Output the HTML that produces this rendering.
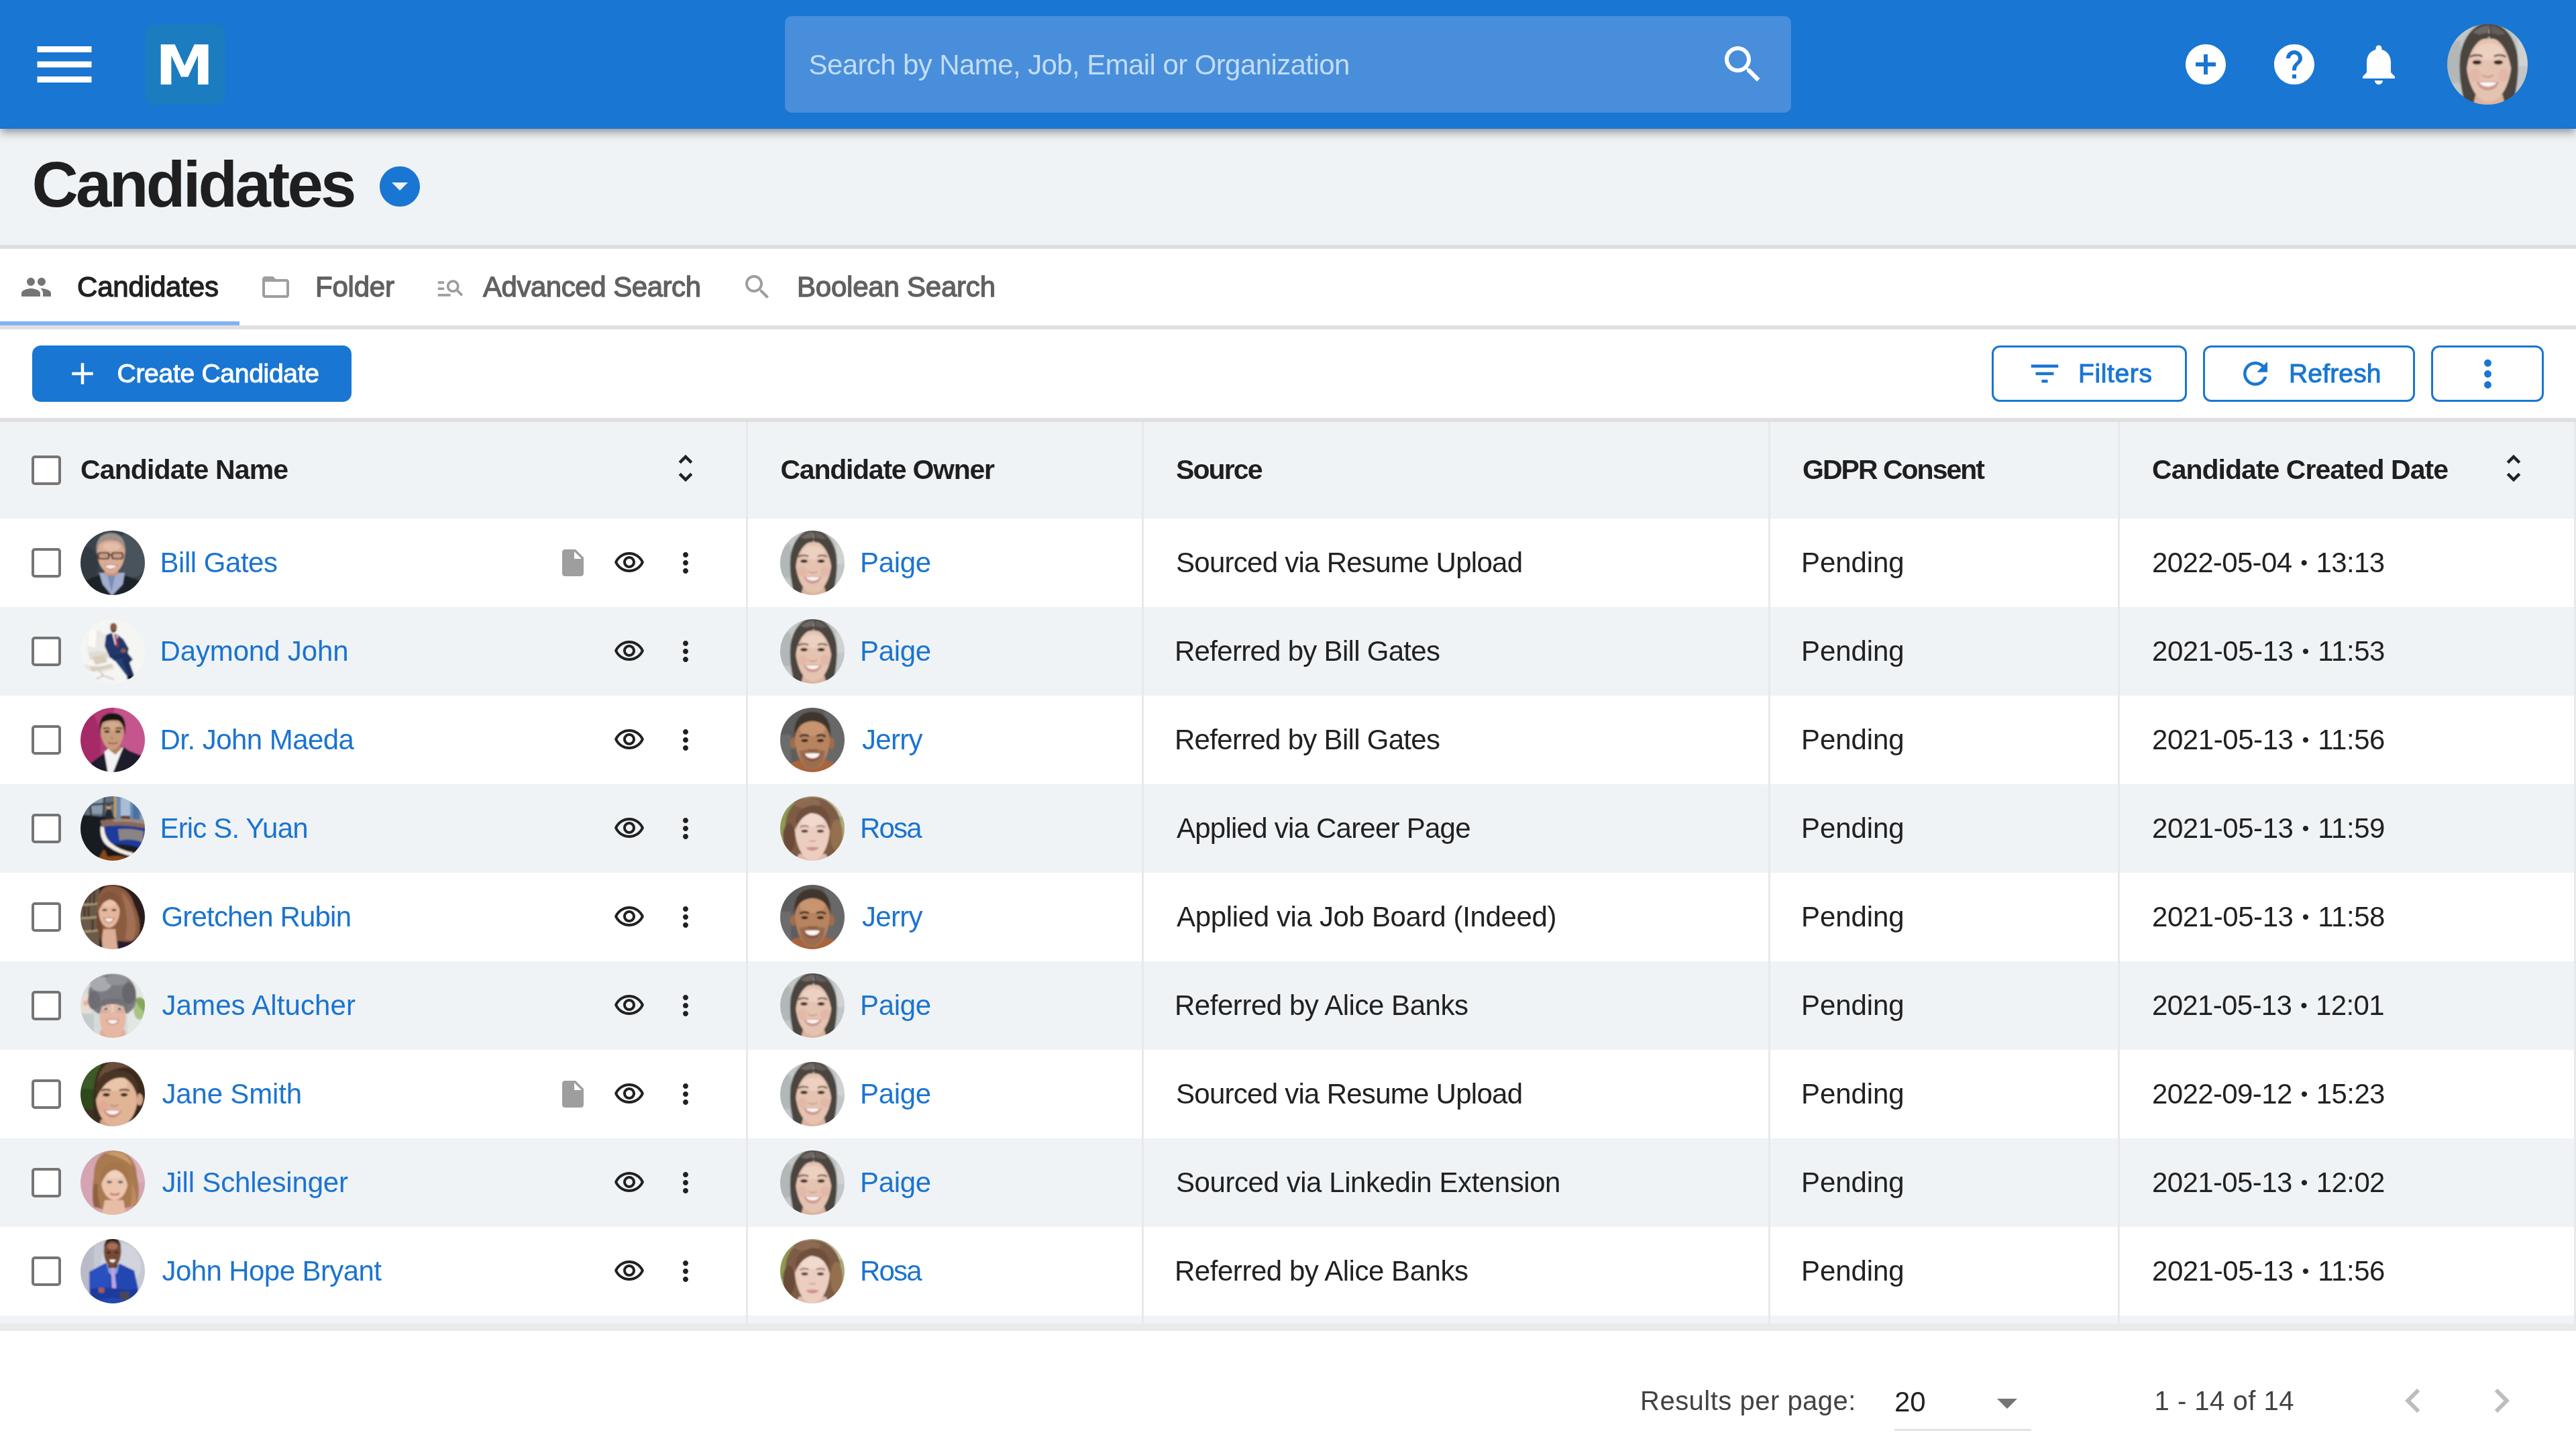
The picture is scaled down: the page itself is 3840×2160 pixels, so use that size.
<!DOCTYPE html>
<html lang="en"><head><meta charset="utf-8"><title>Candidates</title>
<style>
html,body{margin:0;padding:0}
body{width:3840px;height:2160px;overflow:hidden;background:#fff;position:relative;font-family:"Liberation Sans",sans-serif;}
.a{position:absolute}
.t{position:absolute;white-space:nowrap;display:block}
.i{position:absolute;display:block}
.bu{font-size:30px;position:relative;top:-4.5px;margin:0 2.1px}
.dj{font-family:"DejaVu Sans","Liberation Sans",sans-serif}
.av{position:absolute;border-radius:50%;overflow:hidden;display:block}
.cb{position:absolute;width:36px;height:36px;border:4px solid #757575;border-radius:5px;background:#fff}
.btn{position:absolute;box-sizing:border-box;height:84px;border:3px solid #1976d2;border-radius:12px}
#w{position:absolute;left:0;top:0;width:3840px;height:2160px;will-change:transform}
</style></head><body><div id="w">

<svg width="0" height="0" style="position:absolute"><defs><symbol id="menu" viewBox="0 0 24 24"><path d="M3 18h18v-2H3v2zm0-5h18v-2H3v2zm0-7v2h18V6H3z"/></symbol><symbol id="search" viewBox="0 0 24 24"><path d="M15.5 14h-.79l-.28-.27C15.41 12.59 16 11.11 16 9.5 16 5.91 13.09 3 9.5 3S3 5.91 3 9.5 5.91 16 9.5 16c1.61 0 3.09-.59 4.23-1.57l.27.28v.79l5 4.99L20.49 19l-4.99-5zm-6 0C7.01 14 5 11.99 5 9.5S7.01 5 9.5 5 14 7.01 14 9.5 11.99 14 9.5 14z"/></symbol><symbol id="add_circle" viewBox="0 0 24 24"><path d="M12 2C6.48 2 2 6.48 2 12s4.48 10 10 10 10-4.48 10-10S17.52 2 12 2zm5 11h-4v4h-2v-4H7v-2h4V7h2v4h4v2z"/></symbol><symbol id="help" viewBox="0 0 24 24"><path d="M12 2C6.48 2 2 6.48 2 12s4.48 10 10 10 10-4.48 10-10S17.52 2 12 2zm1 17h-2v-2h2v2zm2.07-7.75l-.9.92C13.45 12.9 13 13.5 13 15h-2v-.5c0-1.1.45-2.1 1.17-2.83l1.24-1.26c.37-.36.59-.86.59-1.41 0-1.1-.9-2-2-2s-2 .9-2 2H8c0-2.21 1.79-4 4-4s4 1.79 4 4c0 .88-.36 1.68-.93 2.25z"/></symbol><symbol id="bell" viewBox="0 0 24 24"><path d="M12 22c1.1 0 2-.9 2-2h-4c0 1.1.89 2 2 2zm6-6v-5c0-3.07-1.64-5.64-4.5-6.32V4c0-.83-.67-1.5-1.5-1.5s-1.5.67-1.5 1.5v.68C7.63 5.36 6 7.92 6 11v5l-2 2v1h16v-1l-2-2z"/></symbol><symbol id="ddc" viewBox="0 0 24 24"><path d="M12 2C6.48 2 2 6.48 2 12s4.48 10 10 10 10-4.48 10-10S17.52 2 12 2zm0 12l-4-4h8l-4 4z"/></symbol><symbol id="people" viewBox="0 0 24 24"><path d="M16 11c1.66 0 2.99-1.34 2.99-3S17.66 5 16 5c-1.66 0-3 1.34-3 3s1.34 3 3 3zm-8 0c1.66 0 2.99-1.34 2.99-3S9.66 5 8 5C6.34 5 5 6.34 5 8s1.34 3 3 3zm0 2c-2.33 0-7 1.17-7 3.5V19h14v-2.500c0-2.33-4.67-3.5-7-3.5zm8 0c-.29 0-.62.02-.97.05 1.16.84 1.97 1.97 1.97 3.45V19h6v-2.500c0-2.33-4.67-3.5-7-3.5z"/></symbol><symbol id="folder" viewBox="0 0 24 24"><path d="M20 6h-8l-2-2H4c-1.1 0-1.99.9-1.99 2L2 18c0 1.1.9 2 2 2h16c1.1 0 2-.9 2-2V8c0-1.1-.9-2-2-2zm0 12H4V8h16v10z"/></symbol><symbol id="msearch" viewBox="0 0 24 24"><path d="M7 9H2V7h5v2zm0 3H2v2h5v-2zm13.590 7l-3.830-3.830c-.8.52-1.74.83-2.76.83-2.76 0-5-2.24-5-5s2.24-5 5-5 5 2.24 5 5c0 1.020-.31 1.960-.83 2.750L22 17.590 20.590 19zM17 11c0-1.650-1.350-3-3-3s-3 1.350-3 3 1.350 3 3 3 3-1.350 3-3zM2 19h10v-2H2v2z"/></symbol><symbol id="add" viewBox="0 0 24 24"><path d="M19 13h-6v6h-2v-6H5v-2h6V5h2v6h6v2z"/></symbol><symbol id="filter" viewBox="0 0 24 24"><path d="M10 18h4v-2h-4v2zM3 6v2h18V6H3zm3 7h12v-2H6v2z"/></symbol><symbol id="refresh" viewBox="0 0 24 24"><path d="M17.65 6.35C16.2 4.9 14.21 4 12 4c-4.42 0-7.99 3.58-7.99 8s3.57 8 7.99 8c3.73 0 6.84-2.55 7.73-6h-2.08c-.82 2.33-3.04 4-5.65 4-3.31 0-6-2.69-6-6s2.69-6 6-6c1.66 0 3.14.69 4.22 1.78L13 11h7V4l-2.35 2.35z"/></symbol><symbol id="more" viewBox="0 0 24 24"><path d="M12 8c1.1 0 2-.9 2-2s-.9-2-2-2-2 .9-2 2 .9 2 2 2zm0 2c-1.1 0-2 .9-2 2s.9 2 2 2 2-.9 2-2-.9-2-2-2zm0 6c-1.1 0-2 .9-2 2s.9 2 2 2 2-.9 2-2-.9-2-2-2z"/></symbol><symbol id="unfold" viewBox="0 0 24 24"><path d="M12 5.83L15.17 9l1.41-1.41L12 3 7.41 7.59 8.83 9 12 5.830zm0 12.340L8.83 15l-1.41 1.41L12 21l4.59-4.59L15.17 15 12 18.170z"/></symbol><symbol id="file" viewBox="0 0 24 24"><path d="M6 2c-1.1 0-1.99.9-1.99 2L4 20c0 1.1.89 2 1.99 2H18c1.1 0 2-.9 2-2V8l-6-6H6zm7 7V3.500L18.500 9H13z"/></symbol><symbol id="eye" viewBox="0 0 24 24"><path d="M12 6c3.79 0 7.17 2.13 8.82 5.5C19.17 14.87 15.79 17 12 17s-7.17-2.13-8.82-5.500C4.83 8.13 8.21 6 12 6m0-2C7 4 2.73 7.11 1 11.500 2.73 15.89 7 19 12 19s9.27-3.11 11-7.500C21.27 7.11 17 4 12 4zm0 5c1.38 0 2.5 1.12 2.5 2.500S13.38 14 12 14s-2.500-1.120-2.500-2.500S10.620 9 12 9m0-2c-2.480 0-4.500 2.020-4.500 4.500S9.520 16 12 16s4.500-2.020 4.500-4.500S14.480 7 12 7z"/></symbol><symbol id="chl" viewBox="0 0 24 24"><path d="M15.41 7.41L14 6l-6 6 6 6 1.41-1.41L10.83 12z"/></symbol><symbol id="chr" viewBox="0 0 24 24"><path d="M10 6L8.59 7.41 13.17 12l-4.58 4.59L10 18l6-6z"/></symbol><filter id="bl" x="-5%" y="-5%" width="110%" height="110%"><feGaussianBlur stdDeviation=".9"/></filter><symbol id="av-paige" viewBox="0 0 96 96"><g filter="url(#bl)"><rect x="-10" y="-10" width="116" height="116" fill="#c2c6c6"/>
<rect x="-10" y="20" width="26" height="50" fill="#b2b7b8"/>
<rect x="84" y="-10" width="22" height="60" fill="#cfd2d1"/>
<path d="M49.700 -2C33 -2 19 15 15.500 38C13 62 18 82 22 100L77 100C82 82 86 62 84 38C81 15 66 -2 49.700 -2Z" fill="#4b4541"/>
<path d="M30 10Q40 2 49 1L47 16Q38 12 30 10Z" fill="#6e6763"/>
<path d="M52 1Q62 3 70 12Q60 12 53 16Z" fill="#645d59"/>
<path d="M49.700 0L48.500 17L51 17Z" fill="#b5aeaa"/>
<path d="M34 84L66 84L70 100L30 100Z" fill="#dcb39f"/>
<path d="M49.700 17C66 17 76.500 30 76.500 46C76.500 66 66 93 49.700 93C33 93 23 66 23 46C23 30 33 17 49.700 17Z" fill="#e5c3b1"/>
<ellipse cx="49.700" cy="33" rx="17" ry="10" fill="#ecd0c0"/>
<ellipse cx="33" cy="61" rx="7" ry="8" fill="#e2b9a8"/>
<ellipse cx="67" cy="61" rx="7" ry="8" fill="#e2b9a8"/>
<path d="M49.700 15C38 17 27 28 23.500 52L19 52C17 25 35 9 49.700 11Z" fill="#4b4541"/>
<path d="M49.700 15C61 17 72 28 76 52L81 52C83 25 64 9 49.700 11Z" fill="#4b4541"/>
<ellipse cx="35.500" cy="45.500" rx="5.400" ry="2.600" fill="#3a2a25"/>
<ellipse cx="61" cy="45.500" rx="5.400" ry="2.600" fill="#3a2a25"/>
<path d="M27 39Q35 35 42 38.500" stroke="#5a4238" stroke-width="2" fill="none"/>
<path d="M56 38.500Q63 35 70 39" stroke="#5a4238" stroke-width="2" fill="none"/>
<path d="M42 61Q48.500 65 55 61" stroke="#c9998a" stroke-width="2" fill="none"/>
<path d="M35 69Q48.500 67 62 69Q58 79 48.500 79Q39 79 35 69Z" fill="#cf9892"/>
<path d="M38 69.500Q48.500 68.500 59 69.500Q55 74.500 48.500 74.500Q42 74.500 38 69.500Z" fill="#fbf6f2"/></g></symbol><symbol id="av-jerry" viewBox="0 0 96 96"><g filter="url(#bl)"><rect x="-10" y="-10" width="116" height="116" fill="#5d5d5d"/>
<rect x="66" y="-10" width="40" height="116" fill="#676767"/>
<rect x="-10" y="40" width="26" height="66" fill="#6c6c6c"/>
<path d="M-4 100Q8 80 34 78L62 78Q88 80 100 100Z" fill="#a8653d"/>
<path d="M48 6C30 6 20 20 21 40L23 56L73 56L75 40C76 20 66 6 48 6Z" fill="#40352e"/>
<ellipse cx="19.500" cy="53" rx="4.500" ry="8.500" fill="#a36c49"/>
<ellipse cx="76.500" cy="53" rx="4.500" ry="8.500" fill="#a36c49"/>
<path d="M48 14C64 14 74 26 74 44C74 66 64 92 48 92C32 92 22 66 22 44C22 26 32 14 48 14Z" fill="#b8845f"/>
<ellipse cx="48" cy="30" rx="19" ry="12" fill="#c9956f"/>
<path d="M22 44Q22 12 48 10Q74 12 74 44Q70 21 48 20Q26 21 22 44Z" fill="#40352e"/>
<ellipse cx="36.500" cy="49" rx="5" ry="2.200" fill="#2c211c"/>
<ellipse cx="60" cy="49" rx="5" ry="2.200" fill="#2c211c"/>
<path d="M29 43Q36.500 38.500 43 42.500" stroke="#2c211c" stroke-width="2.600" fill="none"/>
<path d="M54 42.500Q60 38.500 68 43" stroke="#2c211c" stroke-width="2.600" fill="none"/>
<path d="M42 62Q48 65.500 55 62" stroke="#8a553a" stroke-width="2.200" fill="none"/>
<path d="M29 64Q48 60 67 64Q66 88 48 92Q30 88 29 64Z" fill="#7d5540" opacity=".5"/>
<path d="M34 68Q48 66 62 68Q58 80 48 80Q38 80 34 68Z" fill="#8f4f42"/>
<path d="M36.500 68.500Q48 67 59.500 68.500Q56 75.500 48 75.500Q40 75.500 36.500 68.500Z" fill="#fbf7f3"/></g></symbol><symbol id="av-rosa" viewBox="0 0 96 96"><g filter="url(#bl)"><rect x="-10" y="-10" width="116" height="116" fill="#b5b38a"/>
<rect x="-10" y="-10" width="40" height="70" fill="#8f9a54"/>
<rect x="70" y="-10" width="36" height="116" fill="#cfcbae"/>
<rect x="80" y="30" width="26" height="40" fill="#a9ad7a"/>
<path d="M48 1C24 1 8 20 8 44C6 60 10 78 20 92L78 92C90 78 92 60 90 44C90 20 72 1 48 1Z" fill="#7c5b45"/>
<ellipse cx="13" cy="62" rx="9" ry="22" fill="#6b4b37"/>
<ellipse cx="84" cy="58" rx="9" ry="24" fill="#94704f"/>
<ellipse cx="40" cy="10" rx="20" ry="8" fill="#8e6b52"/>
<path d="M28 86L68 86L76 100L20 100Z" fill="#dfbcae"/>
<path d="M48 18C64 18 74 30 74 48C74 68 64 96 48 96C32 96 22 68 22 48C22 30 32 18 48 18Z" fill="#ecCEC1"/>
<ellipse cx="48" cy="34" rx="18" ry="11" fill="#f2d9cd"/>
<path d="M22.500 50Q20 16 50 13Q78 16 73.500 52Q68 26 46 25Q30 30 22.500 50Z" fill="#70503c"/>
<ellipse cx="36.500" cy="52" rx="5" ry="2.200" fill="#4a3a34"/>
<ellipse cx="60" cy="52" rx="5" ry="2.200" fill="#4a3a34"/>
<path d="M29.500 46Q36 42.500 42.500 45.500" stroke="#7d5f50" stroke-width="1.800" fill="none"/>
<path d="M54 45.500Q60 42.500 67 46" stroke="#7d5f50" stroke-width="1.800" fill="none"/>
<path d="M43 66Q48 68.500 53 66" stroke="#c9a092" stroke-width="1.800" fill="none"/>
<path d="M38 76.500Q48 74.500 58 76.500Q54 81 48 81Q42 81 38 76.500Z" fill="#cf8f8a"/></g></symbol><symbol id="av-bill" viewBox="0 0 96 96"><g filter="url(#bl)"><rect x="-10" y="-10" width="116" height="116" fill="#3b434c"/>
<ellipse cx="76" cy="36" rx="26" ry="34" fill="#48525c"/>
<ellipse cx="10" cy="50" rx="16" ry="26" fill="#323a43"/>
<path d="M-4 100L6 76Q20 68 32 65L60 65Q78 70 90 76L100 100Z" fill="#1f2026"/>
<path d="M28 63L66 63L63 80L47 97L33 80Z" fill="#a2aed0"/>
<path d="M40 66L46 92L52 66Z" fill="#7f8db4"/>
<rect x="36" y="54" width="20" height="13" fill="#c8957d"/>
<path d="M45.500 6C58 6 66 16 66 32C66 48 58 64 45.500 64C34 64 25 48 25 32C25 16 33 6 45.500 6Z" fill="#dbac94"/>
<path d="M24 36Q20 5 45 3.500Q68 4 67 34Q63 17 52 15Q36 13 28 20Q25 26 24 36Z" fill="#9c928a"/>
<ellipse cx="46" cy="24" rx="13" ry="6" fill="#e6bea7"/>
<rect x="26.500" y="33" width="16" height="9" rx="3" fill="#c99a84" stroke="#3d302b" stroke-width="2.200"/>
<rect x="47" y="33" width="16" height="9" rx="3" fill="#c99a84" stroke="#3d302b" stroke-width="2.200"/>
<path d="M42.500 36L47 36" stroke="#3d302b" stroke-width="1.800"/>
<path d="M36 51.500Q45 49.500 55 51.500Q51 57.500 45 57.500Q39 57.500 36 51.500Z" fill="#f7eeea" stroke="#a9695c" stroke-width="1"/></g></symbol><symbol id="av-daymond" viewBox="0 0 96 96"><g filter="url(#bl)"><rect x="-10" y="-10" width="116" height="116" fill="#f5f5f4"/>
<path d="M13 20Q15 15 24 16Q36 18 38 30L41 56Q30 62 14 58Q6 40 13 20Z" fill="#ebe9e5"/>
<path d="M13 20Q15 15 24 16L22 42Q14 42 10 38Z" fill="#fbfaf8"/>
<path d="M12 50Q26 46 40 50L42 58Q28 64 14 60Z" fill="#dfdcd6"/>
<path d="M18 56L36 53L40 64L22 68Z" fill="#d8cdb9"/>
<path d="M6 66Q26 76 48 66L52 74Q28 84 6 74Z" fill="#e9e7e3"/>
<path d="M14 70Q30 72 46 66L48 72Q30 76 16 78Z" fill="#d9cfbe"/>
<path d="M28 76L34 84L22 90M34 84L50 90" stroke="#cfccc6" stroke-width="2.400" fill="none"/>
<path d="M38 24Q46 18 54 22L64 30L72 44L70 52L56 56L44 58L36 40Z" fill="#20396c"/>
<path d="M44 56L70 50L78 60L72 66L62 64L50 62Z" fill="#1c3260"/>
<path d="M50 60L62 58L76 82L70 86Z" fill="#233f75"/>
<path d="M62 62L72 62L80 84L74 88Z" fill="#1a2f5c"/>
<path d="M70 84L82 86L80 92L69 89Z" fill="#15161a"/>
<ellipse cx="49.200" cy="12" rx="5.200" ry="6.600" fill="#8a5a42"/>
<path d="M45 15Q49 21 53.500 15L53 18Q49 22 45.500 18Z" fill="#2b1d18"/>
<path d="M47 20L53 20L56 26L52 40Z" fill="#f1f1f3"/>
<path d="M50 22L53 22L57 40L54 42Z" fill="#b3223b"/>
<ellipse cx="64" cy="47" rx="4" ry="3" fill="#8a5a42"/></g></symbol><symbol id="av-maeda" viewBox="0 0 96 96"><g filter="url(#bl)"><rect x="-10" y="-10" width="116" height="116" fill="#b33a76"/>
<ellipse cx="84" cy="36" rx="40" ry="60" fill="#c5568d"/>
<ellipse cx="4" cy="56" rx="26" ry="56" fill="#a62a67"/>
<path d="M6 100L16 82L36 67L40 60L64 58L72 64L92 72L104 100Z" fill="#1d1d2a"/>
<path d="M35.500 66L42 60L64 59L60 68L48 98L41 98Z" fill="#f4f2f3"/>
<path d="M42 62L52 70L62 60L56 56L44 56Z" fill="#b58161"/>
<path d="M47.500 10C58 10 64.500 20 64.500 34C64.500 48 57 63 47.500 63C38 63 30 48 30 34C30 20 37 10 47.500 10Z" fill="#c89b7d"/>
<path d="M29 40Q24 8 48 8Q71 8 66 40Q64 22 56 19Q42 17 33 22Q30 28 29 40Z" fill="#17120f"/>
<ellipse cx="47.500" cy="27" rx="12" ry="6" fill="#d5aa8b"/>
<ellipse cx="39.500" cy="35.500" rx="4" ry="1.800" fill="#2a1c18"/>
<ellipse cx="56" cy="35.500" rx="4" ry="1.800" fill="#2a1c18"/>
<path d="M34 31.500Q39 29 44 31M52 31Q57 29 62 31.500" stroke="#241a16" stroke-width="1.800" fill="none"/>
<path d="M46 42L45 47L50 47Z" fill="#b3836a"/>
<path d="M41 52Q48 54.500 55 52" stroke="#9a5e52" stroke-width="2" fill="none"/></g></symbol><symbol id="av-eric" viewBox="0 0 96 96"><g filter="url(#bl)"><rect x="-10" y="-10" width="116" height="116" fill="#1b1d23"/>
<rect x="-10" y="-10" width="61" height="40" fill="#62717f"/>
<rect x="16" y="-10" width="18" height="36" fill="#8a9bab"/>
<path d="M12 -10L16 30M36 -10L34 30M-4 14L50 10" stroke="#36414c" stroke-width="3"/>
<rect x="52" y="-10" width="54" height="48" fill="#6c8bb4"/>
<rect x="60" y="2" width="14" height="30" fill="#a9bdd6"/>
<rect x="78" y="4" width="10" height="30" fill="#4e70a0"/>
<rect x="90" y="-4" width="16" height="40" fill="#8fa6c6"/>
<rect x="50" y="-10" width="3" height="42" fill="#c9a13c"/>
<path d="M-10 26L30 30L32 106L-10 106Z" fill="#191b21"/>
<path d="M36 30Q38 18 42 18Q47 18 49 31L48 36L37 36Z" fill="#2a2a30"/>
<ellipse cx="42" cy="15.500" rx="3.600" ry="4" fill="#c99a78"/>
<path d="M38 14.500Q42 9 46 14.500Z" fill="#1a1614"/>
<rect x="60" y="29" width="14" height="7" rx="1.500" fill="#5e4029"/>
<path d="M30 36Q62 30 106 38L106 50Q62 40 31 46Z" fill="#86695a"/>
<path d="M48 34Q70 32 100 38L100 42Q70 36 50 38Z" fill="#a58c80"/>
<path d="M31 46Q62 40 106 50L106 84Q70 66 34 74Z" fill="#1c3a9c"/>
<path d="M56 49Q76 47 94 52L93 69Q76 62 58 66Z" fill="#8a8482"/>
<path d="M30 45Q28 64 40 74Q56 86 80 90L78 84Q58 80 46 70Q36 62 35 46Z" fill="#f4ede2"/>
<path d="M34 80Q56 92 84 92L70 106L20 106Z" fill="#8a4a12"/>
<path d="M32 66Q40 80 62 88L40 90Z" fill="#15161a"/></g></symbol><symbol id="av-gretchen" viewBox="0 0 96 96"><g filter="url(#bl)"><rect x="-10" y="-10" width="116" height="116" fill="#2b1e1a"/>
<rect x="-10" y="-10" width="38" height="116" fill="#6b5a47"/>
<path d="M2 30L26 28M0 50L26 48M4 70L26 68" stroke="#a99a7c" stroke-width="3"/>
<path d="M8 -4L8 28M14 -4L14 28M20 -4L20 28M6 32L6 48M12 32L12 48M18 52L18 68" stroke="#40332a" stroke-width="2.500"/>
<path d="M30 100Q40 84 60 82Q84 84 96 100Z" fill="#2a1c2e"/>
<path d="M44 1C28 3 24 20 25 40Q22 62 30 82L62 84Q84 88 88 70Q90 50 80 30C76 12 62 0 44 1Z" fill="#8b5b41"/>
<path d="M60 10Q78 24 82 56Q84 74 76 84L66 80Q74 50 60 10Z" fill="#a27054"/>
<path d="M25 40Q22 62 30 82L36 80Q30 60 30 40Z" fill="#71452f"/>
<path d="M34 66L52 66L56 100L34 100Q30 84 34 66Z" fill="#dcae95"/>
<path d="M42.500 12C52 12 58.500 22 58.500 38C58.500 52 51 64 42.500 64C34 64 27 52 27 38C27 22 33 12 42.500 12Z" fill="#e4b69c"/>
<ellipse cx="42" cy="26" rx="11" ry="7" fill="#ecc4ab"/>
<path d="M27 40Q24 12 44 10Q62 12 60 42Q56 24 44 22Q32 24 27 40Z" fill="#85553a"/>
<ellipse cx="36" cy="37.500" rx="3.400" ry="1.600" fill="#3a2620"/>
<ellipse cx="50" cy="37.500" rx="3.400" ry="1.600" fill="#3a2620"/>
<path d="M35 50Q42.500 48.500 50 50Q47 56 42.500 56Q38 56 35 50Z" fill="#f8efea" stroke="#b8605c" stroke-width="1.200"/></g></symbol><symbol id="av-james" viewBox="0 0 96 96"><g filter="url(#bl)"><rect x="-10" y="-10" width="116" height="116" fill="#d6dbd9"/>
<rect x="70" y="-10" width="36" height="116" fill="#e3e7e4"/>
<ellipse cx="88" cy="52" rx="9" ry="17" fill="#a9c388"/>
<path d="M82 38Q92 34 100 44L96 58Q86 52 82 38Z" fill="#86a65c"/>
<rect x="-10" y="30" width="26" height="30" fill="#e7dcd4"/>
<circle cx="8" cy="44" r="4" fill="#e9b49c"/>
<rect x="-10" y="60" width="30" height="46" fill="#c3ccca"/>
<path d="M48 1C26 0 10 14 12 34Q12 52 26 60L70 60Q84 52 83 34C84 14 70 0 48 1Z" fill="#7a7a80"/>
<ellipse cx="30" cy="16" rx="16" ry="11" fill="#a9a9b0"/>
<ellipse cx="54" cy="10" rx="16" ry="8" fill="#909097"/>
<ellipse cx="72" cy="30" rx="10" ry="16" fill="#66666c"/>
<ellipse cx="20" cy="40" rx="9" ry="14" fill="#6d6d73"/>
<path d="M30 84L66 84L70 106L26 106Z" fill="#e0ae99"/>
<path d="M48 42C60 42 67.500 52 67.500 64C67.500 80 60 98 48 98C36 98 28.500 80 28.500 64C28.500 52 36 42 48 42Z" fill="#e6b7a3"/>
<ellipse cx="48" cy="52" rx="14" ry="6" fill="#efcbb9"/>
<path d="M27 58Q24 36 48 38Q72 36 69 58Q64 45 48 46Q32 45 27 58Z" fill="#6f6f75"/>
<rect x="31" y="49" width="14" height="8" rx="3" fill="none" stroke="#b8a59c" stroke-width="1.300"/>
<rect x="51" y="49" width="14" height="8" rx="3" fill="none" stroke="#b8a59c" stroke-width="1.300"/>
<ellipse cx="38" cy="53" rx="3" ry="1.500" fill="#5a4640"/>
<ellipse cx="58" cy="53" rx="3" ry="1.500" fill="#5a4640"/>
<path d="M39 69.500Q48 68 57 69.500Q54 76 48 76Q42 76 39 69.500Z" fill="#fbf6f2" stroke="#c2726a" stroke-width="1.200"/></g></symbol><symbol id="av-jane" viewBox="0 0 96 96"><g filter="url(#bl)"><rect x="-10" y="-10" width="116" height="116" fill="#2f4a1f"/>
<rect x="-10" y="-10" width="40" height="50" fill="#3a5a28"/>
<rect x="-10" y="70" width="30" height="36" fill="#3d3324"/>
<path d="M52 -4C30 -2 22 16 20 40Q16 70 24 100L106 100L106 -10Z" fill="#3a291f"/>
<path d="M52 -4C36 0 26 16 24 36L28 30Q40 8 70 8Q84 12 92 30L100 20Q80 -6 52 -4Z" fill="#6a4e3b"/>
<path d="M30 86L72 86L76 106L26 106Z" fill="#d3a184"/>
<path d="M53 14C72 14 85 30 85 52C85 76 72 97 53 97C36 97 23 76 23 52C23 30 34 14 53 14Z" fill="#e1b496"/>
<ellipse cx="88" cy="56" rx="5" ry="9" fill="#d7a587"/>
<ellipse cx="50" cy="32" rx="20" ry="11" fill="#ebc5aa"/>
<ellipse cx="34" cy="66" rx="8" ry="8" fill="#e2a996"/>
<path d="M23 56Q18 14 54 12Q90 14 85 54Q80 32 66 24Q38 20 23 56Z" fill="#4a3427"/>
<ellipse cx="38.500" cy="49" rx="5.400" ry="2.400" fill="#2e201b"/>
<ellipse cx="65" cy="49" rx="5.400" ry="2.400" fill="#2e201b"/>
<path d="M31 43Q38 39.500 45 42.500M58 42.500Q65 39.500 73 43" stroke="#4b352c" stroke-width="2.200" fill="none"/>
<path d="M44 64Q50 68 56 64" stroke="#bf8b72" stroke-width="2" fill="none"/>
<path d="M35 72.500Q48 70 61 72.500Q57 83 48 83Q39 83 35 72.500Z" fill="#c98480"/>
<path d="M37.500 73Q48 71.500 58.500 73Q55 78.500 48 78.500Q41 78.500 37.500 73Z" fill="#fbf6f2"/></g></symbol><symbol id="av-jill" viewBox="0 0 96 96"><g filter="url(#bl)"><rect x="-10" y="-10" width="116" height="116" fill="#d4a5b0"/>
<ellipse cx="80" cy="20" rx="30" ry="30" fill="#dbb0ba"/>
<path d="M50 0C30 0 20 16 20 38Q16 60 20 84L34 88L66 86L84 82Q90 60 84 38C84 16 70 0 50 0Z" fill="#a9794f"/>
<path d="M36 4Q52 -2 66 6Q74 12 78 24Q64 10 36 4Z" fill="#c99b69"/>
<path d="M20 50Q16 70 20 84L30 86Q24 66 26 50Z" fill="#8f6240"/>
<path d="M76 46Q84 64 84 82L74 84Q78 66 76 46Z" fill="#ba8c5e"/>
<path d="M36 74L64 74L70 106L30 106Z" fill="#e8bda6"/>
<path d="M51 20C62 20 70.500 30 70.500 46C70.500 60 62 74 51 74C40 74 31 60 31 46C31 30 40 20 51 20Z" fill="#ecc5ae"/>
<ellipse cx="51" cy="34" rx="13" ry="8" fill="#f2d2be"/>
<path d="M31 50Q26 18 54 18Q76 20 70.500 52Q66 32 52 29Q38 30 31 50Z" fill="#a5744b"/>
<ellipse cx="43" cy="47" rx="3.800" ry="1.800" fill="#5a5560"/>
<ellipse cx="59.500" cy="47" rx="3.800" ry="1.800" fill="#5a5560"/>
<path d="M44 64Q51 68 58 64" stroke="#d0746e" stroke-width="2.600" fill="none"/></g></symbol><symbol id="av-bryant" viewBox="0 0 96 96"><g filter="url(#bl)"><rect x="-10" y="-10" width="116" height="116" fill="#c6c8d3"/>
<ellipse cx="60" cy="40" rx="30" ry="34" fill="#d2d4dd"/>
<rect x="-10" y="-10" width="30" height="116" fill="#b9bcc8"/>
<path d="M14 106L13 49L37 36L59 37L80 47L86 74L84 106Z" fill="#2447b2"/>
<path d="M13 49L37 36L44 60L40 80L14 80Z" fill="#2a50c0"/>
<path d="M38.500 36L57.500 37L55 50L48 56L42 50Z" fill="#8d9cda"/>
<path d="M45.500 43L50.500 43L54 78L50 82L47 78Z" fill="#bba4e2"/>
<path d="M14 74Q40 70 70 76L86 74L84 92Q50 84 16 92Z" fill="#1d3b9c"/>
<path d="M27 73Q32 71 36 74L35 80Q30 81 27 79Z" fill="#a0604a"/>
<path d="M58 79L72 78L73 90L60 91Z" fill="#4a4a52"/>
<rect x="41" y="34" width="14" height="9" fill="#5d3b2c"/>
<path d="M47.600 -1C56 -1 60.500 7 60.500 18C60.500 30 55 41.500 47.600 41.500C40 41.500 34.800 30 34.800 18C34.800 7 40 -1 47.600 -1Z" fill="#774835"/>
<ellipse cx="47.600" cy="11" rx="8" ry="5" fill="#a17059"/>
<path d="M35 12Q36 -2 47.600 -2.500Q59 -2 60.300 12Q56 3 47.600 3Q40 3 35 12Z" fill="#2a1d18"/>
<ellipse cx="42" cy="20" rx="2.800" ry="1.300" fill="#1e1410"/>
<ellipse cx="53.500" cy="20" rx="2.800" ry="1.300" fill="#1e1410"/>
<path d="M42 30.500Q47.600 29.500 53.500 30.500Q51 35.500 47.600 35.500Q44.500 35.500 42 30.500Z" fill="#fbf6f2" stroke="#4a2c24" stroke-width=".8"/></g></symbol></defs></svg>
<div class="a" style="left:0;top:192px;width:3840px;height:173px;background:#eff3f6"></div>
<div class="a" style="left:0;top:365px;width:3840px;height:6px;background:#dddfe0"></div>
<span class="t " id="t0" style="left:47.50px;top:207.80px;font-size:96px;line-height:134px;letter-spacing:-3.717px;color:#1f1f1f;font-weight:700;">Candidates</span>
<svg class="i" style="left:560.00px;top:241.50px;width:72px;height:72px;fill:#1976d2;" viewBox="0 0 24 24"><use href="#ddc"/></svg>
<div class="a" style="left:0;top:0;width:3840px;height:192px;background:#1976d2;box-shadow:0 6px 9px -3px rgba(0,0,0,.22),0 9px 12px 0 rgba(0,0,0,.13),0 3px 18px 0 rgba(0,0,0,.1)"></div>
<svg class="i" style="left:42.00px;top:42.00px;width:108px;height:108px;fill:#fff;" viewBox="0 0 24 24"><use href="#menu"/></svg>
<div class="a" style="left:216px;top:36px;width:120px;height:120px;border-radius:14px;background:#1b7cbf"></div>
<span class="t dj" id="t1" style="left:234.10px;top:41.30px;font-size:82px;line-height:114px;letter-spacing:2.987px;color:#fff;font-weight:700;transform:scaleX(1.064);transform-origin:34.2px 50%;letter-spacing:0;">M</span>
<div class="a" style="left:1170px;top:24px;width:1500px;height:144px;border-radius:10px;background:#488edb"></div>
<span class="t " id="t2" style="left:1205.50px;top:67.50px;font-size:42px;line-height:58px;letter-spacing:-0.592px;color:#c3dcf6;">Search by Name, Job, Email or Organization</span>
<svg class="i" style="left:2562.00px;top:60.00px;width:72px;height:72px;fill:#fff;" viewBox="0 0 24 24"><use href="#search"/></svg>
<svg class="i" style="left:3252.00px;top:60.00px;width:72px;height:72px;fill:#fff;" viewBox="0 0 24 24"><use href="#add_circle"/></svg>
<svg class="i" style="left:3384.00px;top:60.00px;width:72px;height:72px;fill:#fff;" viewBox="0 0 24 24"><use href="#help"/></svg>
<svg class="i" style="left:3510.00px;top:60.00px;width:72px;height:72px;fill:#fff;" viewBox="0 0 24 24"><use href="#bell"/></svg>
<svg class="av" style="left:3648.00px;top:36.00px;width:120px;height:120px" viewBox="0 0 96 96"><use href="#av-paige"/></svg>
<div class="a" style="left:0;top:485px;width:3840px;height:6px;background:#e0e0e0"></div>
<div class="a" style="left:0;top:479px;width:357px;height:6px;background:#82b1f7"></div>
<svg class="i" style="left:30.00px;top:403.50px;width:48px;height:48px;fill:#757575;" viewBox="0 0 24 24"><use href="#people"/></svg>
<span class="t " id="t3" style="left:115.00px;top:399.00px;font-size:42px;line-height:58px;letter-spacing:-0.165px;color:#212121;-webkit-text-stroke:1.3px #212121;">Candidates</span>
<svg class="i" style="left:386.60px;top:404.00px;width:48px;height:48px;fill:#9e9e9e;" viewBox="0 0 24 24"><use href="#folder"/></svg>
<span class="t " id="t4" style="left:470.00px;top:399.00px;font-size:42px;line-height:58px;letter-spacing:-0.209px;color:#616161;-webkit-text-stroke:1.3px #616161;">Folder</span>
<svg class="i" style="left:649.00px;top:405.70px;width:45px;height:45px;fill:#9e9e9e;" viewBox="0 0 24 24"><use href="#msearch"/></svg>
<span class="t " id="t5" style="left:720.00px;top:399.00px;font-size:42px;line-height:58px;letter-spacing:-0.469px;color:#616161;-webkit-text-stroke:1.3px #616161;">Advanced Search</span>
<svg class="i" style="left:1105.00px;top:404.00px;width:48px;height:48px;fill:#9e9e9e;" viewBox="0 0 24 24"><use href="#search"/></svg>
<span class="t " id="t6" style="left:1188.00px;top:399.00px;font-size:42px;line-height:58px;letter-spacing:-0.222px;color:#616161;-webkit-text-stroke:1.3px #616161;">Boolean Search</span>
<div class="a" style="left:0;top:623px;width:3840px;height:6px;background:#dfe0e2"></div>
<div class="a" style="left:48px;top:515px;width:476px;height:84px;border-radius:13px;background:#1976d2"></div>
<svg class="i" style="left:96.00px;top:530.00px;width:54px;height:54px;fill:#fff;" viewBox="0 0 24 24"><use href="#add"/></svg>
<span class="t " id="t7" style="left:174.50px;top:529.50px;font-size:39px;line-height:54px;letter-spacing:-0.278px;color:#fff;-webkit-text-stroke:1.0px #fff;">Create Candidate</span>
<div class="btn" style="left:2969px;top:515px;width:291px"></div>
<svg class="i" style="left:3020.50px;top:530.00px;width:54px;height:54px;fill:#1976d2;" viewBox="0 0 24 24"><use href="#filter"/></svg>
<span class="t " id="t8" style="left:3098.00px;top:529.50px;font-size:39px;line-height:54px;letter-spacing:0.638px;color:#1976d2;-webkit-text-stroke:1.0px #1976d2;">Filters</span>
<div class="btn" style="left:3284px;top:515px;width:316px"></div>
<svg class="i" style="left:3335.00px;top:530.00px;width:54px;height:54px;fill:#1976d2;" viewBox="0 0 24 24"><use href="#refresh"/></svg>
<span class="t " id="t9" style="left:3412.00px;top:529.50px;font-size:39px;line-height:54px;letter-spacing:0.159px;color:#1976d2;-webkit-text-stroke:1.0px #1976d2;">Refresh</span>
<div class="btn" style="left:3624px;top:515px;width:168px"></div>
<svg class="i" style="left:3675.50px;top:524.50px;width:65px;height:65px;fill:#1976d2;" viewBox="0 0 24 24"><use href="#more"/></svg>
<div class="a" style="left:0;top:629px;width:3840px;height:144px;background:#eff3f6"></div>
<div class="cb" style="left:47px;top:817px"></div>
<svg class="av" style="left:119.70px;top:791.00px;width:96px;height:96px" viewBox="0 0 96 96"><use href="#av-bill"/></svg>
<span class="t " id="t10" style="left:238.50px;top:810.00px;font-size:42px;line-height:58px;letter-spacing:-0.470px;color:#1b74cf;">Bill Gates</span>
<svg class="i" style="left:830.00px;top:815.00px;width:48px;height:48px;fill:#9e9e9e;" viewBox="0 0 24 24"><use href="#file"/></svg>
<svg class="i" style="left:914.10px;top:814.70px;width:48px;height:48px;fill:#212121;" viewBox="0 0 24 24"><use href="#eye"/></svg>
<svg class="i" style="left:998.00px;top:815.00px;width:48px;height:48px;fill:#212121;" viewBox="0 0 24 24"><use href="#more"/></svg>
<svg class="av" style="left:1163.00px;top:791.00px;width:96px;height:96px" viewBox="0 0 96 96"><use href="#av-paige"/></svg>
<span class="t " id="t11" style="left:1282.00px;top:810.00px;font-size:42px;line-height:58px;letter-spacing:-0.355px;color:#1b74cf;">Paige</span>
<span class="t " id="t12" style="left:1753.00px;top:810.00px;font-size:42px;line-height:58px;letter-spacing:-0.734px;color:#212121;">Sourced via Resume Upload</span>
<span class="t " id="t13" style="left:2685.00px;top:810.00px;font-size:42px;line-height:58px;letter-spacing:-0.107px;color:#212121;">Pending</span>
<span class="t " id="t14" style="left:3208.00px;top:810.00px;font-size:42px;line-height:58px;letter-spacing:-0.647px;color:#212121;">2022-05-04 <span class="bu">•</span> 13:13</span>
<div class="a" style="left:0;top:905px;width:3840px;height:132px;background:#eff3f6"></div>
<div class="cb" style="left:47px;top:949px"></div>
<svg class="av" style="left:119.70px;top:923.00px;width:96px;height:96px" viewBox="0 0 96 96"><use href="#av-daymond"/></svg>
<span class="t " id="t15" style="left:238.50px;top:942.00px;font-size:42px;line-height:58px;letter-spacing:-0.136px;color:#1b74cf;">Daymond John</span>
<svg class="i" style="left:914.10px;top:946.70px;width:48px;height:48px;fill:#212121;" viewBox="0 0 24 24"><use href="#eye"/></svg>
<svg class="i" style="left:998.00px;top:947.00px;width:48px;height:48px;fill:#212121;" viewBox="0 0 24 24"><use href="#more"/></svg>
<svg class="av" style="left:1163.00px;top:923.00px;width:96px;height:96px" viewBox="0 0 96 96"><use href="#av-paige"/></svg>
<span class="t " id="t16" style="left:1282.00px;top:942.00px;font-size:42px;line-height:58px;letter-spacing:-0.355px;color:#1b74cf;">Paige</span>
<span class="t " id="t17" style="left:1751.00px;top:942.00px;font-size:42px;line-height:58px;letter-spacing:-0.707px;color:#212121;">Referred by Bill Gates</span>
<span class="t " id="t18" style="left:2685.00px;top:942.00px;font-size:42px;line-height:58px;letter-spacing:-0.107px;color:#212121;">Pending</span>
<span class="t " id="t19" style="left:3208.00px;top:942.00px;font-size:42px;line-height:58px;letter-spacing:-0.435px;color:#212121;">2021-05-13 <span class="bu">•</span> 11:53</span>
<div class="cb" style="left:47px;top:1081px"></div>
<svg class="av" style="left:119.70px;top:1055.00px;width:96px;height:96px" viewBox="0 0 96 96"><use href="#av-maeda"/></svg>
<span class="t " id="t20" style="left:238.50px;top:1074.00px;font-size:42px;line-height:58px;letter-spacing:-0.540px;color:#1b74cf;">Dr. John Maeda</span>
<svg class="i" style="left:914.10px;top:1078.70px;width:48px;height:48px;fill:#212121;" viewBox="0 0 24 24"><use href="#eye"/></svg>
<svg class="i" style="left:998.00px;top:1079.00px;width:48px;height:48px;fill:#212121;" viewBox="0 0 24 24"><use href="#more"/></svg>
<svg class="av" style="left:1163.00px;top:1055.00px;width:96px;height:96px" viewBox="0 0 96 96"><use href="#av-jerry"/></svg>
<span class="t " id="t21" style="left:1285.00px;top:1074.00px;font-size:42px;line-height:58px;letter-spacing:-0.707px;color:#1b74cf;">Jerry</span>
<span class="t " id="t22" style="left:1751.00px;top:1074.00px;font-size:42px;line-height:58px;letter-spacing:-0.707px;color:#212121;">Referred by Bill Gates</span>
<span class="t " id="t23" style="left:2685.00px;top:1074.00px;font-size:42px;line-height:58px;letter-spacing:-0.107px;color:#212121;">Pending</span>
<span class="t " id="t24" style="left:3208.00px;top:1074.00px;font-size:42px;line-height:58px;letter-spacing:-0.435px;color:#212121;">2021-05-13 <span class="bu">•</span> 11:56</span>
<div class="a" style="left:0;top:1169px;width:3840px;height:132px;background:#eff3f6"></div>
<div class="cb" style="left:47px;top:1213px"></div>
<svg class="av" style="left:119.70px;top:1187.00px;width:96px;height:96px" viewBox="0 0 96 96"><use href="#av-eric"/></svg>
<span class="t " id="t25" style="left:238.50px;top:1206.00px;font-size:42px;line-height:58px;letter-spacing:-0.852px;color:#1b74cf;">Eric S. Yuan</span>
<svg class="i" style="left:914.10px;top:1210.70px;width:48px;height:48px;fill:#212121;" viewBox="0 0 24 24"><use href="#eye"/></svg>
<svg class="i" style="left:998.00px;top:1211.00px;width:48px;height:48px;fill:#212121;" viewBox="0 0 24 24"><use href="#more"/></svg>
<svg class="av" style="left:1163.00px;top:1187.00px;width:96px;height:96px" viewBox="0 0 96 96"><use href="#av-rosa"/></svg>
<span class="t " id="t26" style="left:1282.00px;top:1206.00px;font-size:42px;line-height:58px;letter-spacing:-1.849px;color:#1b74cf;">Rosa</span>
<span class="t " id="t27" style="left:1754.00px;top:1206.00px;font-size:42px;line-height:58px;letter-spacing:-0.763px;color:#212121;">Applied via Career Page</span>
<span class="t " id="t28" style="left:2685.00px;top:1206.00px;font-size:42px;line-height:58px;letter-spacing:-0.107px;color:#212121;">Pending</span>
<span class="t " id="t29" style="left:3208.00px;top:1206.00px;font-size:42px;line-height:58px;letter-spacing:-0.435px;color:#212121;">2021-05-13 <span class="bu">•</span> 11:59</span>
<div class="cb" style="left:47px;top:1345px"></div>
<svg class="av" style="left:119.70px;top:1319.00px;width:96px;height:96px" viewBox="0 0 96 96"><use href="#av-gretchen"/></svg>
<span class="t " id="t30" style="left:240.50px;top:1338.00px;font-size:42px;line-height:58px;letter-spacing:-0.821px;color:#1b74cf;">Gretchen Rubin</span>
<svg class="i" style="left:914.10px;top:1342.70px;width:48px;height:48px;fill:#212121;" viewBox="0 0 24 24"><use href="#eye"/></svg>
<svg class="i" style="left:998.00px;top:1343.00px;width:48px;height:48px;fill:#212121;" viewBox="0 0 24 24"><use href="#more"/></svg>
<svg class="av" style="left:1163.00px;top:1319.00px;width:96px;height:96px" viewBox="0 0 96 96"><use href="#av-jerry"/></svg>
<span class="t " id="t31" style="left:1285.00px;top:1338.00px;font-size:42px;line-height:58px;letter-spacing:-0.707px;color:#1b74cf;">Jerry</span>
<span class="t " id="t32" style="left:1754.00px;top:1338.00px;font-size:42px;line-height:58px;letter-spacing:-0.352px;color:#212121;">Applied via Job Board (Indeed)</span>
<span class="t " id="t33" style="left:2685.00px;top:1338.00px;font-size:42px;line-height:58px;letter-spacing:-0.107px;color:#212121;">Pending</span>
<span class="t " id="t34" style="left:3208.00px;top:1338.00px;font-size:42px;line-height:58px;letter-spacing:-0.435px;color:#212121;">2021-05-13 <span class="bu">•</span> 11:58</span>
<div class="a" style="left:0;top:1433px;width:3840px;height:132px;background:#eff3f6"></div>
<div class="cb" style="left:47px;top:1477px"></div>
<svg class="av" style="left:119.70px;top:1451.00px;width:96px;height:96px" viewBox="0 0 96 96"><use href="#av-james"/></svg>
<span class="t " id="t35" style="left:241.50px;top:1470.00px;font-size:42px;line-height:58px;letter-spacing:0.105px;color:#1b74cf;">James Altucher</span>
<svg class="i" style="left:914.10px;top:1474.70px;width:48px;height:48px;fill:#212121;" viewBox="0 0 24 24"><use href="#eye"/></svg>
<svg class="i" style="left:998.00px;top:1475.00px;width:48px;height:48px;fill:#212121;" viewBox="0 0 24 24"><use href="#more"/></svg>
<svg class="av" style="left:1163.00px;top:1451.00px;width:96px;height:96px" viewBox="0 0 96 96"><use href="#av-paige"/></svg>
<span class="t " id="t36" style="left:1282.00px;top:1470.00px;font-size:42px;line-height:58px;letter-spacing:-0.355px;color:#1b74cf;">Paige</span>
<span class="t " id="t37" style="left:1751.00px;top:1470.00px;font-size:42px;line-height:58px;letter-spacing:-0.465px;color:#212121;">Referred by Alice Banks</span>
<span class="t " id="t38" style="left:2685.00px;top:1470.00px;font-size:42px;line-height:58px;letter-spacing:-0.107px;color:#212121;">Pending</span>
<span class="t " id="t39" style="left:3208.00px;top:1470.00px;font-size:42px;line-height:58px;letter-spacing:-0.676px;color:#212121;">2021-05-13 <span class="bu">•</span> 12:01</span>
<div class="cb" style="left:47px;top:1609px"></div>
<svg class="av" style="left:119.70px;top:1583.00px;width:96px;height:96px" viewBox="0 0 96 96"><use href="#av-jane"/></svg>
<span class="t " id="t40" style="left:241.50px;top:1602.00px;font-size:42px;line-height:58px;letter-spacing:-0.179px;color:#1b74cf;">Jane Smith</span>
<svg class="i" style="left:830.00px;top:1607.00px;width:48px;height:48px;fill:#9e9e9e;" viewBox="0 0 24 24"><use href="#file"/></svg>
<svg class="i" style="left:914.10px;top:1606.70px;width:48px;height:48px;fill:#212121;" viewBox="0 0 24 24"><use href="#eye"/></svg>
<svg class="i" style="left:998.00px;top:1607.00px;width:48px;height:48px;fill:#212121;" viewBox="0 0 24 24"><use href="#more"/></svg>
<svg class="av" style="left:1163.00px;top:1583.00px;width:96px;height:96px" viewBox="0 0 96 96"><use href="#av-paige"/></svg>
<span class="t " id="t41" style="left:1282.00px;top:1602.00px;font-size:42px;line-height:58px;letter-spacing:-0.355px;color:#1b74cf;">Paige</span>
<span class="t " id="t42" style="left:1753.00px;top:1602.00px;font-size:42px;line-height:58px;letter-spacing:-0.734px;color:#212121;">Sourced via Resume Upload</span>
<span class="t " id="t43" style="left:2685.00px;top:1602.00px;font-size:42px;line-height:58px;letter-spacing:-0.107px;color:#212121;">Pending</span>
<span class="t " id="t44" style="left:3208.00px;top:1602.00px;font-size:42px;line-height:58px;letter-spacing:-0.618px;color:#212121;">2022-09-12 <span class="bu">•</span> 15:23</span>
<div class="a" style="left:0;top:1697px;width:3840px;height:132px;background:#eff3f6"></div>
<div class="cb" style="left:47px;top:1741px"></div>
<svg class="av" style="left:119.70px;top:1715.00px;width:96px;height:96px" viewBox="0 0 96 96"><use href="#av-jill"/></svg>
<span class="t " id="t45" style="left:241.50px;top:1734.00px;font-size:42px;line-height:58px;letter-spacing:-0.174px;color:#1b74cf;">Jill Schlesinger</span>
<svg class="i" style="left:914.10px;top:1738.70px;width:48px;height:48px;fill:#212121;" viewBox="0 0 24 24"><use href="#eye"/></svg>
<svg class="i" style="left:998.00px;top:1739.00px;width:48px;height:48px;fill:#212121;" viewBox="0 0 24 24"><use href="#more"/></svg>
<svg class="av" style="left:1163.00px;top:1715.00px;width:96px;height:96px" viewBox="0 0 96 96"><use href="#av-paige"/></svg>
<span class="t " id="t46" style="left:1282.00px;top:1734.00px;font-size:42px;line-height:58px;letter-spacing:-0.355px;color:#1b74cf;">Paige</span>
<span class="t " id="t47" style="left:1753.00px;top:1734.00px;font-size:42px;line-height:58px;letter-spacing:-0.433px;color:#212121;">Sourced via Linkedin Extension</span>
<span class="t " id="t48" style="left:2685.00px;top:1734.00px;font-size:42px;line-height:58px;letter-spacing:-0.107px;color:#212121;">Pending</span>
<span class="t " id="t49" style="left:3208.00px;top:1734.00px;font-size:42px;line-height:58px;letter-spacing:-0.618px;color:#212121;">2021-05-13 <span class="bu">•</span> 12:02</span>
<div class="cb" style="left:47px;top:1873px"></div>
<svg class="av" style="left:119.70px;top:1847.00px;width:96px;height:96px" viewBox="0 0 96 96"><use href="#av-bryant"/></svg>
<span class="t " id="t50" style="left:241.50px;top:1866.00px;font-size:42px;line-height:58px;letter-spacing:-0.581px;color:#1b74cf;">John Hope Bryant</span>
<svg class="i" style="left:914.10px;top:1870.70px;width:48px;height:48px;fill:#212121;" viewBox="0 0 24 24"><use href="#eye"/></svg>
<svg class="i" style="left:998.00px;top:1871.00px;width:48px;height:48px;fill:#212121;" viewBox="0 0 24 24"><use href="#more"/></svg>
<svg class="av" style="left:1163.00px;top:1847.00px;width:96px;height:96px" viewBox="0 0 96 96"><use href="#av-rosa"/></svg>
<span class="t " id="t51" style="left:1282.00px;top:1866.00px;font-size:42px;line-height:58px;letter-spacing:-1.849px;color:#1b74cf;">Rosa</span>
<span class="t " id="t52" style="left:1751.00px;top:1866.00px;font-size:42px;line-height:58px;letter-spacing:-0.465px;color:#212121;">Referred by Alice Banks</span>
<span class="t " id="t53" style="left:2685.00px;top:1866.00px;font-size:42px;line-height:58px;letter-spacing:-0.107px;color:#212121;">Pending</span>
<span class="t " id="t54" style="left:3208.00px;top:1866.00px;font-size:42px;line-height:58px;letter-spacing:-0.435px;color:#212121;">2021-05-13 <span class="bu">•</span> 11:56</span>
<div class="a" style="left:0;top:1961px;width:3840px;height:12px;background:#f1f4f6"></div>
<div class="a" style="left:1112px;top:629px;width:3px;height:1344px;background:#e7e9eb"></div>
<div class="a" style="left:1702px;top:629px;width:3px;height:1344px;background:#e7e9eb"></div>
<div class="a" style="left:2636px;top:629px;width:3px;height:1344px;background:#e7e9eb"></div>
<div class="a" style="left:3157px;top:629px;width:3px;height:1344px;background:#e7e9eb"></div>
<div class="a" style="left:3837px;top:629px;width:3px;height:1344px;background:#e7e9eb"></div>
<div class="cb" style="left:47px;top:679px"></div>
<span class="t " id="t55" style="left:120.00px;top:671.50px;font-size:41px;line-height:57px;letter-spacing:-0.864px;color:#1f1f1f;font-weight:700;">Candidate Name</span>
<svg class="i" style="left:995.00px;top:671.00px;width:54px;height:54px;fill:#212121;" viewBox="0 0 24 24"><use href="#unfold"/></svg>
<span class="t " id="t56" style="left:1163.50px;top:671.50px;font-size:41px;line-height:57px;letter-spacing:-1.261px;color:#1f1f1f;font-weight:700;">Candidate Owner</span>
<span class="t " id="t57" style="left:1753.00px;top:671.50px;font-size:41px;line-height:57px;letter-spacing:-1.897px;color:#1f1f1f;font-weight:700;">Source</span>
<span class="t " id="t58" style="left:2687.00px;top:671.50px;font-size:41px;line-height:57px;letter-spacing:-1.986px;color:#1f1f1f;font-weight:700;">GDPR Consent</span>
<span class="t " id="t59" style="left:3208.00px;top:671.50px;font-size:41px;line-height:57px;letter-spacing:-0.975px;color:#1f1f1f;font-weight:700;">Candidate Created Date</span>
<svg class="i" style="left:3720.00px;top:671.00px;width:54px;height:54px;fill:#212121;" viewBox="0 0 24 24"><use href="#unfold"/></svg>
<div class="a" style="left:0;top:1973px;width:3840px;height:11px;background:#e9ebea"></div>
<span class="t " id="t60" style="left:2445.00px;top:2060.40px;font-size:40px;line-height:56px;letter-spacing:0.497px;color:#424242;">Results per page:</span>
<span class="t " id="t61" style="left:2824.00px;top:2061.30px;font-size:42px;line-height:58px;letter-spacing:-0.219px;color:#212121;">20</span>
<div class="a" style="left:2977px;top:2085px;width:0;height:0;border-left:15px solid transparent;border-right:15px solid transparent;border-top:15px solid #757575"></div>
<div class="a" style="left:2824px;top:2130px;width:204px;height:3px;background:#e2e2e2"></div>
<span class="t " id="t62" style="left:3211.50px;top:2060.40px;font-size:40px;line-height:56px;letter-spacing:0.511px;color:#424242;">1 - 14 of 14</span>
<svg class="i" style="left:3561.40px;top:2052.00px;width:72px;height:72px;fill:#bdbdbd;" viewBox="0 0 24 24"><use href="#chl"/></svg>
<svg class="i" style="left:3693.30px;top:2052.00px;width:72px;height:72px;fill:#bdbdbd;" viewBox="0 0 24 24"><use href="#chr"/></svg>
</div><script>(function(){var w=window.innerWidth;if(w&&Math.abs(w-3840)>1){document.documentElement.style.zoom=w/3840;}})();</script></body></html>
